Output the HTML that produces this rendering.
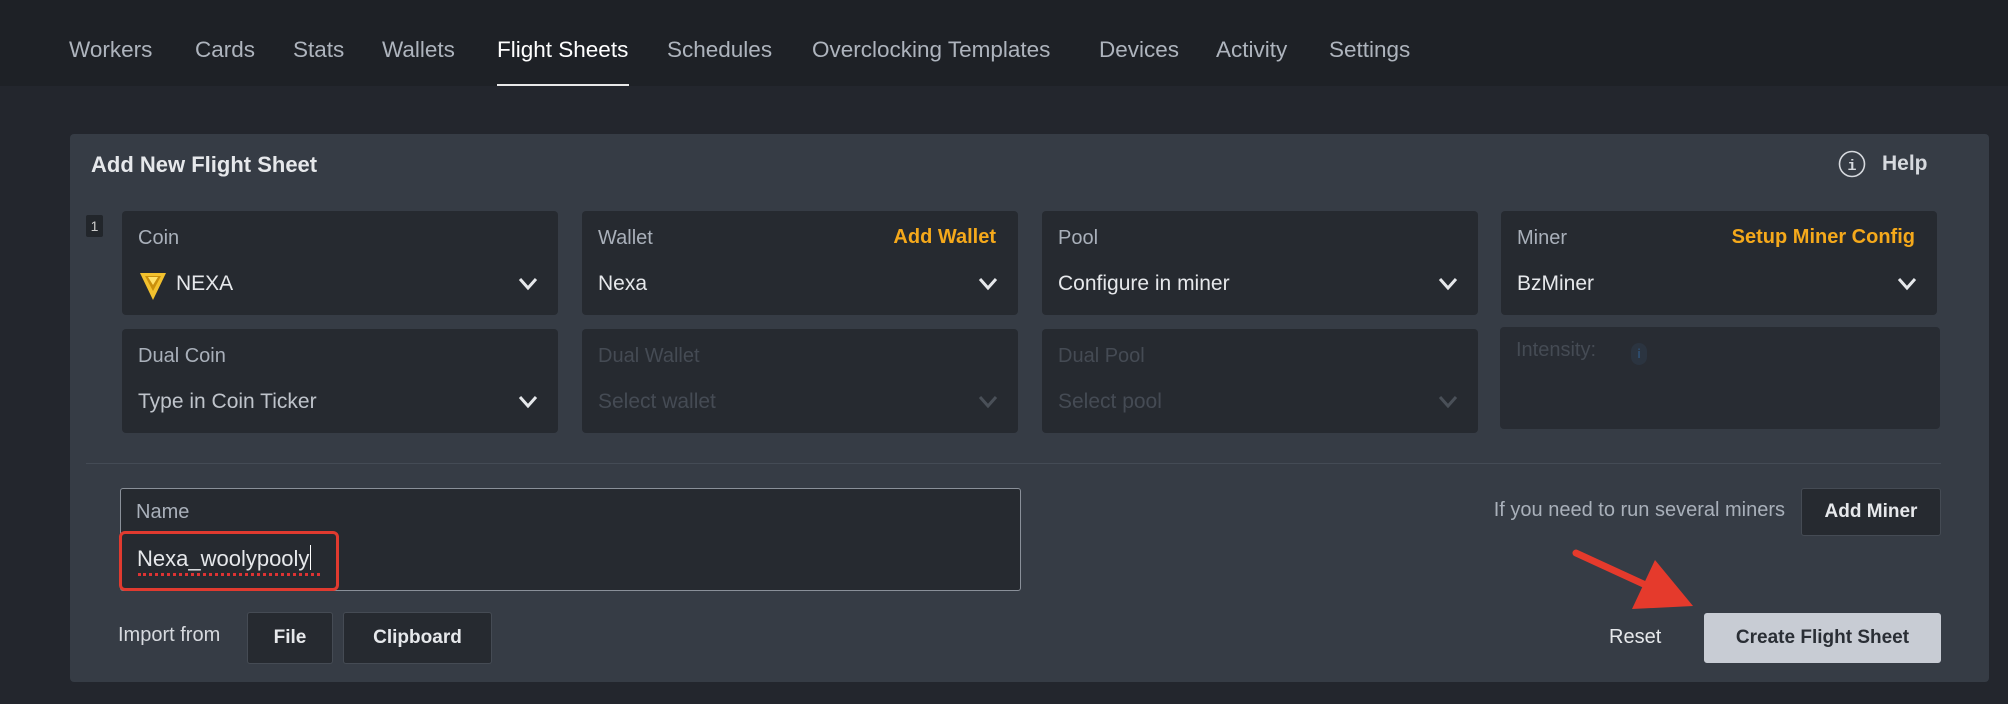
<!DOCTYPE html>
<html><head><meta charset="utf-8"><style>
*{box-sizing:border-box;margin:0;padding:0}
body{width:2008px;height:704px;background:#23262d;font-family:"Liberation Sans",sans-serif;position:relative;overflow:hidden;color:#d6d9de}
.nav{position:absolute;left:0;top:0;width:2008px;height:86px;background:#1e2126}
.nav span{position:absolute;top:37px;font-size:22.5px;color:#aeb4bd;white-space:nowrap}
.nav .act{color:#fff}
.ul{position:absolute;left:497px;top:84px;width:132px;height:2px;background:#e8e8e8}
.panel{position:absolute;left:70px;top:134px;width:1919px;height:548px;background:#363c45;border-radius:4px}
.abs{position:absolute}
.card{position:absolute;background:#262a30;border-radius:4px;width:436px;height:104px}
.lbl{position:absolute;left:16px;top:16px;font-size:20px;color:#a9b0ba}
.val{position:absolute;left:16px;top:61px;font-size:21px;color:#e6e8eb}
.lnk{position:absolute;right:22px;top:15px;font-size:20px;font-weight:bold;color:#f5a91b}
.chev{position:absolute;right:20px;top:66px}
.dis .lbl,.dis .val{color:#454b54}
.btn{position:absolute;background:#262a30;border:1px solid #454b54;border-radius:3px;font-weight:bold;font-size:19px;color:#e6e8eb;display:flex;align-items:center;justify-content:center}
</style></head><body>
<div class="nav">
<span style="left:69px">Workers</span>
<span style="left:195px">Cards</span>
<span style="left:293px">Stats</span>
<span style="left:382px">Wallets</span>
<span class="act" style="left:497px">Flight Sheets</span>
<span style="left:667px">Schedules</span>
<span style="left:812px">Overclocking Templates</span>
<span style="left:1099px">Devices</span>
<span style="left:1216px">Activity</span>
<span style="left:1329px">Settings</span>
<div class="ul"></div>
</div>
<div class="panel"></div>
<div class="abs" style="left:91px;top:152px;font-size:22px;font-weight:bold;color:#e6e8eb">Add New Flight Sheet</div>
<svg class="abs" style="left:1838px;top:150px" width="28" height="28"><circle cx="14" cy="14" r="12.5" fill="none" stroke="#d6d9de" stroke-width="1.6"/><text x="14" y="20" text-anchor="middle" font-family="Liberation Mono" font-size="15" font-weight="bold" fill="#d6d9de">i</text></svg>
<div class="abs" style="left:1882px;top:152px;font-size:21px;font-weight:bold;color:#d6d9de">Help</div>
<div class="abs" style="left:86px;top:215px;width:17px;height:22px;background:#22262b;border-radius:2px;font-size:14px;color:#ccc;text-align:center;line-height:22px">1</div>

<div class="card" style="left:122px;top:211px"><div class="lbl">Coin</div>
<svg class="abs" style="left:17px;top:60px" width="28" height="30" viewBox="0 0 28 30"><polygon points="1,2 27,2 14,29" fill="#f2c12e"/><polygon points="6,5 22,5 14,20" fill="#c98f0c"/><polygon points="9,6 19,6 14,14" fill="#ffe169"/></svg>
<div class="val" style="left:54px">NEXA</div>
<svg class="chev" width="20" height="14"><polyline points="2,2 10,11 18,2" fill="none" stroke="#e6e8eb" stroke-width="3"/></svg></div>
<div class="card" style="left:582px;top:211px"><div class="lbl">Wallet</div><div class="lnk">Add Wallet</div><div class="val">Nexa</div>
<svg class="chev" width="20" height="14"><polyline points="2,2 10,11 18,2" fill="none" stroke="#e6e8eb" stroke-width="3"/></svg></div>
<div class="card" style="left:1042px;top:211px"><div class="lbl">Pool</div><div class="val">Configure in miner</div>
<svg class="chev" width="20" height="14"><polyline points="2,2 10,11 18,2" fill="none" stroke="#e6e8eb" stroke-width="3"/></svg></div>
<div class="card" style="left:1501px;top:211px"><div class="lbl">Miner</div><div class="lnk">Setup Miner Config</div><div class="val">BzMiner</div>
<svg class="chev" width="20" height="14"><polyline points="2,2 10,11 18,2" fill="none" stroke="#e6e8eb" stroke-width="3"/></svg></div>

<div class="card" style="left:122px;top:329px"><div class="lbl">Dual Coin</div><div class="val" style="color:#bfc4cb">Type in Coin Ticker</div>
<svg class="chev" width="20" height="14"><polyline points="2,2 10,11 18,2" fill="none" stroke="#e6e8eb" stroke-width="3"/></svg></div>
<div class="card dis" style="left:582px;top:329px"><div class="lbl">Dual Wallet</div><div class="val">Select wallet</div>
<svg class="chev" width="20" height="14"><polyline points="2,2 10,11 18,2" fill="none" stroke="#4a5058" stroke-width="3"/></svg></div>
<div class="card dis" style="left:1042px;top:329px"><div class="lbl">Dual Pool</div><div class="val">Select pool</div>
<svg class="chev" width="20" height="14"><polyline points="2,2 10,11 18,2" fill="none" stroke="#4a5058" stroke-width="3"/></svg></div>
<div class="card dis" style="left:1500px;top:327px;width:440px;height:102px;background:#282c33"><div class="lbl" style="top:12px">Intensity:</div>
<div class="abs" style="left:131px;top:16px;width:16px;height:22px;border-radius:8px;background:#2b3440;color:#2f4e70;font-size:13px;text-align:center;line-height:22px;font-weight:bold">i</div></div>

<div class="abs" style="left:86px;top:463px;width:1855px;height:1px;background:#444b55"></div>

<div class="abs" style="left:120px;top:488px;width:901px;height:103px;background:#262a30;border:1px solid #8a9099;border-radius:3px"></div>
<div class="abs" style="left:136px;top:501px;font-size:20px;color:#a9b0ba">Name</div>
<div class="abs" style="left:119px;top:531px;width:220px;height:60px;border:3px solid #e03a2f;border-radius:6px"></div>
<div class="abs" style="left:137px;top:545px;font-size:22px;color:#e6e8eb">Nexa_woolypooly<span style="display:inline-block;width:1px;height:25px;background:#fff;vertical-align:-4px;margin-left:1px"></span></div>
<div class="abs" style="left:138px;top:573px;width:182px;height:0;border-top:3px dotted #d33"></div>

<div class="abs" style="left:1300px;width:485px;text-align:right;top:499px;font-size:20px;color:#a9b0ba">If you need to run several miners</div>
<div class="btn" style="left:1801px;top:488px;width:140px;height:48px">Add Miner</div>

<div class="abs" style="left:118px;top:624px;font-size:20px;color:#d6d9de">Import from</div>
<div class="btn" style="left:247px;top:612px;width:86px;height:52px">File</div>
<div class="btn" style="left:343px;top:612px;width:149px;height:52px">Clipboard</div>
<div class="abs" style="left:1609px;top:626px;font-size:20px;color:#e6e8eb">Reset</div>
<div class="btn" style="left:1704px;top:613px;width:237px;height:50px;background:#c8ccd4;border-color:#c8ccd4;color:#2a2e35">Create Flight Sheet</div>

<svg class="abs" style="left:1560px;top:545px" width="150" height="75"><line x1="16" y1="8" x2="90" y2="42" stroke="#e53a2c" stroke-width="7" stroke-linecap="round"/><polygon points="95,15 72,64 133,61" fill="#e53a2c"/></svg>
</body></html>
